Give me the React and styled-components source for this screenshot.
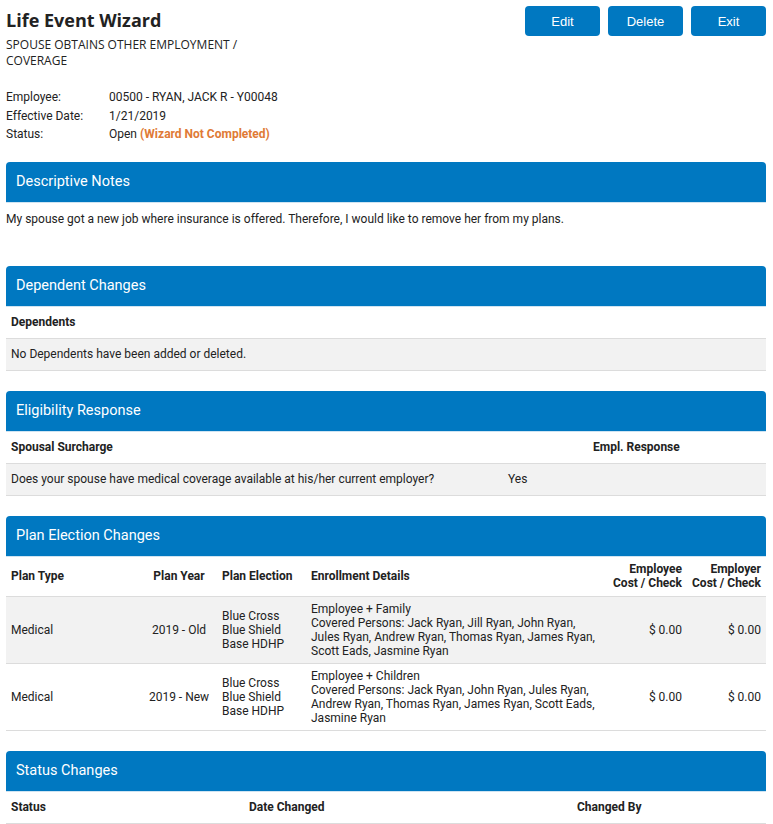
import React from "react";
import styled, { createGlobalStyle } from "styled-components";

const Global = createGlobalStyle`
  html, body { margin: 0; padding: 0; background: #fff; }
  body { font-family: Roboto, "Liberation Sans", Arial, sans-serif; color: #333; font-size: 12px; }
  * { box-sizing: border-box; }
`;

const BLUE = "#0078c1";

const Page = styled.div`
  width: 773px;
  padding: 6px 7px 0 6px;
`;

const Top = styled.div`
  display: flex;
  justify-content: space-between;
  align-items: flex-start;
`;

const TitleBlock = styled.div`
  padding-top: 2px;
`;

const Title = styled.h1`
  margin: 0;
  font-family: "Open Sans", sans-serif;
  font-weight: 700;
  font-size: 18px;
  line-height: 24px;
  color: #222;
`;

const Subtitle = styled.div`
  margin-top: 5px;
  width: 250px;
  font-family: "Open Sans", sans-serif;
  font-size: 12px;
  line-height: 16px;
  color: #222;
  text-transform: uppercase;
`;

const Buttons = styled.div`
  display: flex;
  gap: 8px;
`;

const Button = styled.button`
  width: 75px;
  height: 30px;
  border: none;
  border-radius: 4px;
  background: ${BLUE};
  color: #fff;
  font-family: "Liberation Sans", Arial, sans-serif;
  font-size: 13px;
  cursor: pointer;
`;

const Info = styled.div`
  margin-top: 19px;
  display: grid;
  grid-template-columns: 103px 1fr;
  line-height: 18.5px;
  font-size: 12px;
  color: #222;
`;

const Warn = styled.span`
  color: #e07a36;
  font-weight: 700;
`;

const Panel = styled.section`
  margin-top: ${(p) => p.$mt ?? 20}px;
`;

const PanelHead = styled.div`
  height: 41px;
  background: ${BLUE};
  border-radius: 4px 4px 0 0;
  border-bottom: 1px solid #cfe4f2;
  color: #fff;
  font-size: 14.5px;
  display: flex;
  align-items: center;
  padding-left: 10px;
`;

const Notes = styled.div`
  padding: 8px 0 19px 0;
  line-height: 16px;
  color: #222;
`;

const Row = styled.div`
  display: grid;
  grid-template-columns: ${(p) => p.$cols};
  align-items: center;
  background: ${(p) => (p.$shade ? "#f2f2f2" : "#fff")};
  border-bottom: 1px solid #dcdcdc;
  min-height: ${(p) => p.$h || 32}px;
  padding: ${(p) => p.$pad || 0}px 0;
  line-height: 14px;
  color: #222;
`;

const HeadRow = styled(Row)`
  font-weight: 700;
  color: #222;
`;

const Cell = styled.div`
  padding: 0 5px;
  text-align: ${(p) => p.$align || "left"};
  white-space: ${(p) => (p.$nowrap ? "nowrap" : "normal")};
`;

const planCols = "135px 76px 89px 300px 81px 79px";
const eligCols = "497px 85px 178px";
const statusCols = "238px 328px 194px";

const plans = [
  {
    type: "Medical",
    year: "2019 - Old",
    details: [
      "Employee + Family",
      "Covered Persons: Jack Ryan, Jill Ryan, John Ryan, Jules Ryan, Andrew Ryan, Thomas Ryan, James Ryan, Scott Eads, Jasmine Ryan",
    ],
    shade: true,
  },
  {
    type: "Medical",
    year: "2019 - New",
    details: [
      "Employee + Children",
      "Covered Persons: Jack Ryan, John Ryan, Jules Ryan, Andrew Ryan, Thomas Ryan, James Ryan, Scott Eads, Jasmine Ryan",
    ],
    shade: false,
  },
];

export default function App() {
  return (
    <Page>
      <Global />
      <Top>
        <TitleBlock>
          <Title>Life Event Wizard</Title>
          <Subtitle>Spouse obtains other employment / coverage</Subtitle>
        </TitleBlock>
        <Buttons>
          <Button>Edit</Button>
          <Button>Delete</Button>
          <Button>Exit</Button>
        </Buttons>
      </Top>

      <Info>
        <span>Employee:</span>
        <span>00500 - RYAN, JACK R - Y00048</span>
        <span>Effective Date:</span>
        <span>1/21/2019</span>
        <span>Status:</span>
        <span>
          Open <Warn>(Wizard Not Completed)</Warn>
        </span>
      </Info>

      <Panel $mt={18}>
        <PanelHead>Descriptive Notes</PanelHead>
        <Notes>
          My spouse got a new job where insurance is offered. Therefore, I would like to remove her from my plans.
        </Notes>
      </Panel>

      <Panel>
        <PanelHead>Dependent Changes</PanelHead>
        <HeadRow $cols="1fr">
          <Cell>Dependents</Cell>
        </HeadRow>
        <Row $cols="1fr" $shade>
          <Cell>No Dependents have been added or deleted.</Cell>
        </Row>
      </Panel>

      <Panel>
        <PanelHead>Eligibility Response</PanelHead>
        <HeadRow $cols="582px 178px">
          <Cell>Spousal Surcharge</Cell>
          <Cell>Empl. Response</Cell>
        </HeadRow>
        <Row $cols={eligCols} $shade>
          <Cell>Does your spouse have medical coverage available at his/her current employer?</Cell>
          <Cell>Yes</Cell>
          <Cell />
        </Row>
      </Panel>

      <Panel>
        <PanelHead>Plan Election Changes</PanelHead>
        <HeadRow $cols={planCols} $pad={5} $h={40}>
          <Cell>Plan Type</Cell>
          <Cell $align="center">Plan Year</Cell>
          <Cell $nowrap>Plan Election</Cell>
          <Cell>Enrollment Details</Cell>
          <Cell $align="right" $nowrap>
            Employee
            <br />
            Cost / Check
          </Cell>
          <Cell $align="right" $nowrap>
            Employer
            <br />
            Cost / Check
          </Cell>
        </HeadRow>
        {plans.map((p, i) => (
          <Row key={i} $cols={planCols} $shade={p.shade} $pad={5} $h={66}>
            <Cell>{p.type}</Cell>
            <Cell $align="center" $nowrap>{p.year}</Cell>
            <Cell>
              Blue Cross
              <br />
              Blue Shield
              <br />
              Base HDHP
            </Cell>
            <Cell>
              {p.details[0]}
              <br />
              {p.details[1]}
            </Cell>
            <Cell $align="right">$ 0.00</Cell>
            <Cell $align="right">$ 0.00</Cell>
          </Row>
        ))}
      </Panel>

      <Panel>
        <PanelHead>Status Changes</PanelHead>
        <HeadRow $cols={statusCols}>
          <Cell>Status</Cell>
          <Cell>Date Changed</Cell>
          <Cell>Changed By</Cell>
        </HeadRow>
      </Panel>
    </Page>
  );
}
